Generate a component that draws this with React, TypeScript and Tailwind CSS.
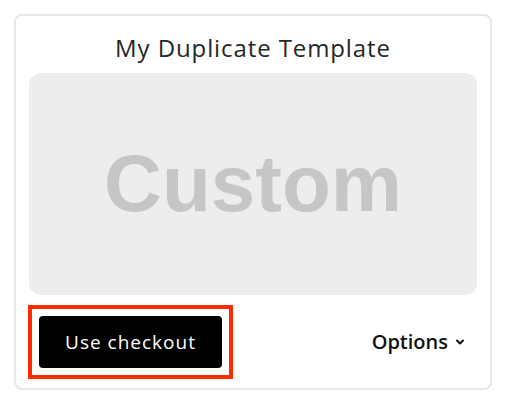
import { ChevronDown } from 'lucide-react';

export default function App() {
  return (
    <div className="min-h-screen bg-white p-[14px] font-['Open_Sans',sans-serif]">
      <div className="w-[478px] rounded-[8px] border-2 border-[#e3e8eb] bg-white">
        {/* Title */}
        <div className="pt-[18px] pb-[12px] text-center text-[24px] leading-[27px] tracking-[0.9px] text-[#262626]">
          My Duplicate Template
        </div>

        {/* Preview */}
        <div className="px-[13px]">
          <div className="flex h-[222px] items-center justify-center rounded-[12px] bg-[#ededed]">
            <span className="font-['Liberation_Sans',Arial,sans-serif] text-[80px] font-bold leading-none text-[#c6c6c6]">
              Custom
            </span>
          </div>
        </div>

        {/* Footer */}
        <div className="flex items-center justify-between pl-[12px] pr-[24px] pt-[10px] pb-[9px]">
          <div className="border-4 border-[#ff2a00] p-[7px]">
            <button className="flex h-[52px] w-[183px] items-center justify-center rounded-[4px] bg-black text-[19px] tracking-[1px] text-white">
              Use checkout
            </button>
          </div>
          <button className="flex items-center gap-[6px] text-[20px] font-semibold text-[#111]">
            Options
            <ChevronDown size={12} strokeWidth={4} />
          </button>
        </div>
      </div>
    </div>
  );
}
